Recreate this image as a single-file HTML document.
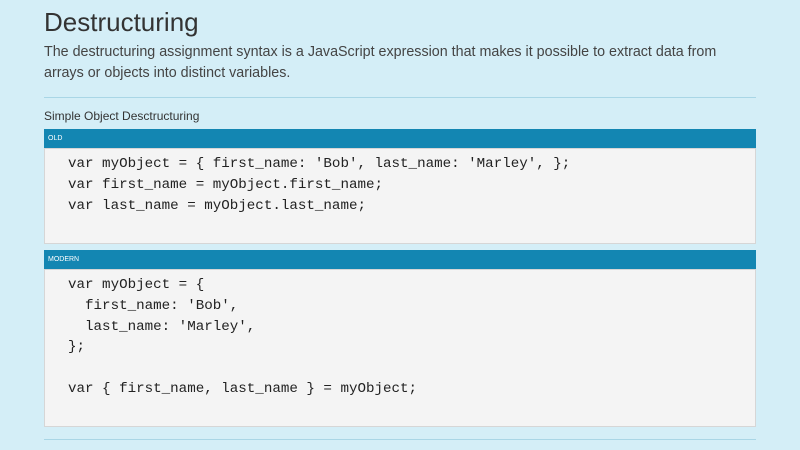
<!DOCTYPE html>
<html><head><style>
body{margin:0;background:#d4eef7;font-family:"Liberation Sans",sans-serif;color:#333;width:800px;height:450px;overflow:hidden}
h1{position:absolute;left:44px;top:7px;margin:0;font-weight:normal;font-size:26px;color:#333}
p{position:absolute;left:44px;top:42px;margin:0;font-size:14.3px;line-height:21px;color:#444;width:690px}
.hr{position:absolute;left:44px;width:712px;height:1px;background:#a9d6e6}
.lab{position:absolute;left:44px;top:109px;font-size:12px;color:#333}
.bar{position:absolute;left:44px;width:712px;height:19px;background:#1386b2;color:#fff;font-size:7px;line-height:19px;padding-left:4px;box-sizing:border-box}
.code{position:absolute;left:44px;width:712px;background:#f4f4f4;border:1px solid #d6d6d6;box-sizing:border-box;font-family:"Liberation Mono",monospace;font-size:14.2px;line-height:20.8px;color:#222;white-space:pre;padding:5px 0 0 23px}
</style></head><body>
<h1>Destructuring</h1>
<p>The destructuring assignment syntax is a JavaScript expression that makes it possible to extract data from arrays or objects into distinct variables.</p>
<div class="hr" style="top:97px"></div>
<div class="lab">Simple Object Desctructuring</div>
<div class="bar" style="top:129px">OLD</div>
<div class="code" style="top:148px;height:96px">var myObject = { first_name: 'Bob', last_name: 'Marley', };
var first_name = myObject.first_name;
var last_name = myObject.last_name;</div>
<div class="bar" style="top:250px">MODERN</div>
<div class="code" style="top:269px;height:158px">var myObject = {
  first_name: 'Bob',
  last_name: 'Marley',
};

var { first_name, last_name } = myObject;</div>
<div class="hr" style="top:439px"></div>
</body></html>
